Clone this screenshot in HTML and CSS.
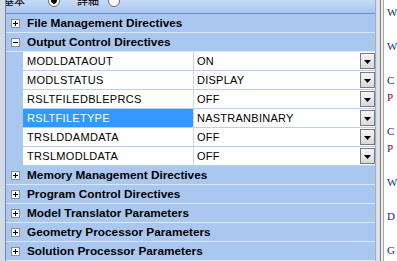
FILE: index.html
```html
<!DOCTYPE html>
<html>
<head>
<meta charset="utf-8">
<link rel="stylesheet" href="styles.css">
</head>
<body>
<div class="frame">
  <div class="leftedge"></div>
  <div class="panel">
    <div class="topbar">
      <div class="modes">
        <span class="jp">基本</span>
        <span class="radio on"></span>
        <span class="jp jp2">詳細</span>
        <span class="radio r2"></span>
      </div>
    </div>
    <div class="group"><svg class="box" width="9" height="9" viewBox="0 0 9 9"><rect x="0.5" y="0.5" width="8" height="8" fill="#fff" stroke="#8c8c8c"/><path d="M2 4.5h5M4.5 2v5" stroke="#000" stroke-width="1"/></svg><span class="gtitle">File Management Directives</span></div>
    <div class="group"><svg class="box" width="9" height="9" viewBox="0 0 9 9"><rect x="0.5" y="0.5" width="8" height="8" fill="#fff" stroke="#8c8c8c"/><path d="M2 4.5h5" stroke="#000" stroke-width="1"/></svg><span class="gtitle">Output Control Directives</span></div>
    <div class="table">
      <div class="row"><div class="indent"></div><div class="name">MODLDATAOUT</div><div class="value"><span class="vtext">ON</span><span class="drop"><svg width="7" height="4" viewBox="0 0 7 4"><path d="M0 0h7L3.5 4z" fill="#000"/></svg></span></div></div>
      <div class="row"><div class="indent"></div><div class="name">MODLSTATUS</div><div class="value"><span class="vtext">DISPLAY</span><span class="drop"><svg width="7" height="4" viewBox="0 0 7 4"><path d="M0 0h7L3.5 4z" fill="#000"/></svg></span></div></div>
      <div class="row"><div class="indent"></div><div class="name">RSLTFILEDBLEPRCS</div><div class="value"><span class="vtext">OFF</span><span class="drop"><svg width="7" height="4" viewBox="0 0 7 4"><path d="M0 0h7L3.5 4z" fill="#000"/></svg></span></div></div>
      <div class="row"><div class="indent"></div><div class="name selected">RSLTFILETYPE</div><div class="value"><span class="vtext">NASTRANBINARY</span><span class="drop"><svg width="7" height="4" viewBox="0 0 7 4"><path d="M0 0h7L3.5 4z" fill="#000"/></svg></span></div></div>
      <div class="row"><div class="indent"></div><div class="name">TRSLDDAMDATA</div><div class="value"><span class="vtext">OFF</span><span class="drop"><svg width="7" height="4" viewBox="0 0 7 4"><path d="M0 0h7L3.5 4z" fill="#000"/></svg></span></div></div>
      <div class="row"><div class="indent"></div><div class="name">TRSLMODLDATA</div><div class="value"><span class="vtext">OFF</span><span class="drop"><svg width="7" height="4" viewBox="0 0 7 4"><path d="M0 0h7L3.5 4z" fill="#000"/></svg></span></div></div>
    </div>
    <div class="group"><svg class="box" width="9" height="9" viewBox="0 0 9 9"><rect x="0.5" y="0.5" width="8" height="8" fill="#fff" stroke="#8c8c8c"/><path d="M2 4.5h5M4.5 2v5" stroke="#000" stroke-width="1"/></svg><span class="gtitle">Memory Management Directives</span></div>
    <div class="group"><svg class="box" width="9" height="9" viewBox="0 0 9 9"><rect x="0.5" y="0.5" width="8" height="8" fill="#fff" stroke="#8c8c8c"/><path d="M2 4.5h5M4.5 2v5" stroke="#000" stroke-width="1"/></svg><span class="gtitle">Program Control Directives</span></div>
    <div class="group"><svg class="box" width="9" height="9" viewBox="0 0 9 9"><rect x="0.5" y="0.5" width="8" height="8" fill="#fff" stroke="#8c8c8c"/><path d="M2 4.5h5M4.5 2v5" stroke="#000" stroke-width="1"/></svg><span class="gtitle">Model Translator Parameters</span></div>
    <div class="group"><svg class="box" width="9" height="9" viewBox="0 0 9 9"><rect x="0.5" y="0.5" width="8" height="8" fill="#fff" stroke="#8c8c8c"/><path d="M2 4.5h5M4.5 2v5" stroke="#000" stroke-width="1"/></svg><span class="gtitle">Geometry Processor Parameters</span></div>
    <div class="group"><svg class="box" width="9" height="9" viewBox="0 0 9 9"><rect x="0.5" y="0.5" width="8" height="8" fill="#fff" stroke="#8c8c8c"/><path d="M2 4.5h5M4.5 2v5" stroke="#000" stroke-width="1"/></svg><span class="gtitle">Solution Processor Parameters</span></div>
  </div>
  <div class="gutter">
    <div class="g1"></div><div class="g2"></div><div class="g3"></div><div class="g4"></div>
  </div>
  <div class="log">
    <div class="ln navy">W</div>
    <div class="ln">&nbsp;</div>
    <div class="ln navy">W</div>
    <div class="ln">&nbsp;</div>
    <div class="ln navy">C</div>
    <div class="ln maroon">P</div>
    <div class="ln">&nbsp;</div>
    <div class="ln navy">C</div>
    <div class="ln maroon">P</div>
    <div class="ln">&nbsp;</div>
    <div class="ln navy">W</div>
    <div class="ln">&nbsp;</div>
    <div class="ln navy">D</div>
    <div class="ln">&nbsp;</div>
    <div class="ln navy">G</div>
  </div>
</div>
</body>
</html>
```
FILE: styles.css
```css
html, body {
  margin: 0;
  padding: 0;
  width: 397px;
  height: 261px;
  overflow: hidden;
  background: #ffffff;
}
.frame {
  display: flex;
  width: 397px;
  height: 261px;
  overflow: hidden;
  font-family: "Liberation Sans", Arial, sans-serif;
}
.leftedge {
  width: 5px;
  flex: none;
  background: #d2dbe9;
  border-right: 1px solid #7d8796;
}
.panel {
  width: 369px;
  flex: none;
  display: flex;
  flex-direction: column;
  background: #aac7f0;
  border-right: 1px solid #8eb0e3;
  overflow: hidden;
}
.topbar {
  height: 13px;
  flex: none;
  border-bottom: 1px solid #6d90c9;
  background: linear-gradient(#c9dcf6, #a7c4ee);
  overflow: hidden;
}
.modes {
  display: flex;
  align-items: center;
  margin-top: -8px;
  margin-left: -3px;
  height: 16px;
}
.jp {
  font-family: "Noto Sans CJK JP", sans-serif;
  font-size: 11px;
  line-height: 16px;
  color: #000;
}
.jp2 {
  margin-left: 17px;
}
.radio {
  width: 12px;
  height: 12px;
  border: 1px solid #6b6b6b;
  border-radius: 50%;
  background: #fff;
  margin-left: 23px;
  box-sizing: border-box;
  margin-top: 2px;
  flex: none;
}
.radio.r2 {
  margin-left: 9px;
}
.radio.on {
  background: radial-gradient(circle, #000 0 2.5px, #fff 3px);
}
.group {
  height: 18px;
  flex: none;
  display: flex;
  align-items: center;
  padding-left: 5px;
  border-bottom: 1px solid #dce8f9;
}
.box {
  flex: none;
  display: block;
}
.gtitle {
  margin-left: 7px;
  font-weight: bold;
  font-size: 11.8px;
  color: #000;
  white-space: nowrap;
}
.table {
  display: flex;
  flex-direction: column;
  flex: none;
}
.row {
  display: flex;
  height: 19px;
}
.indent {
  width: 17px;
  flex: none;
}
.name {
  width: 166px;
  flex: none;
  background: #fff;
  padding-left: 4px;
  border-right: 1px solid #c9d9f1;
  border-bottom: 1px solid #b9cfee;
  font-size: 11px;
  letter-spacing: 0.3px;
  line-height: 18px;
  color: #000;
}
.name.selected {
  background: #3399ff;
  color: #fff;
}
.value {
  flex: 1;
  display: flex;
  align-items: center;
  background: #fff;
  padding-left: 3px;
  border-bottom: 1px solid #b9cfee;
  font-size: 11px;
  letter-spacing: 0.25px;
  color: #000;
}
.vtext {
  flex: 1;
  line-height: 18px;
}
.drop {
  width: 13px;
  height: 14px;
  flex: none;
  border: 1px solid #7a7a7a;
  background: linear-gradient(#f6f6f6, #d9d9d9);
  display: flex;
  align-items: center;
  justify-content: center;
}
.drop svg {
  display: block;
  margin-top: 1px;
}
.gutter {
  width: 8px;
  flex: none;
  display: flex;
}
.g1 { width: 4px; background: #dedede; }
.g2 { width: 1px; background: #7b7b7b; }
.g3 { width: 2px; background: #eeeeee; }
.g4 { width: 1px; background: #a5a5a5; }
.log {
  flex: 1;
  background: #fff;
  padding-top: 4px;
  padding-left: 3px;
  font-family: "Liberation Serif", serif;
  font-size: 11px;
  line-height: 17px;
  overflow: hidden;
}
.ln { white-space: nowrap; }
.navy { color: #14286e; }
.maroon { color: #7a1020; }
```
